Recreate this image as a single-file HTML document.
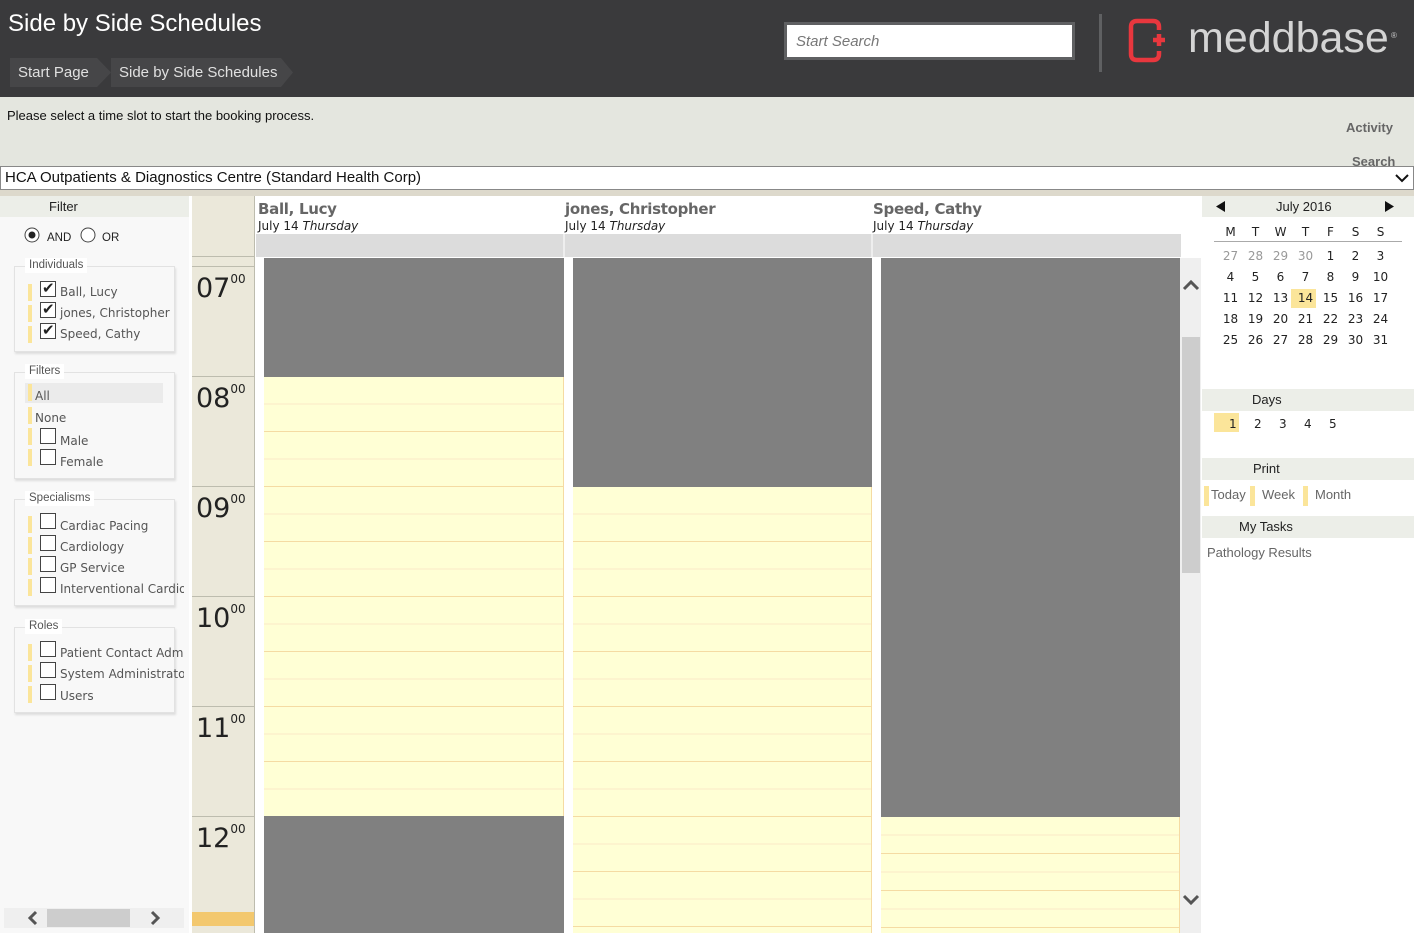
<!DOCTYPE html>
<html><head><meta charset="utf-8"><style>
*{margin:0;padding:0;box-sizing:border-box}
body{width:1414px;height:933px;overflow:hidden;position:relative;background:#fff;font-family:"Liberation Sans","DejaVu Sans",sans-serif;font-size:13px;color:#222}
.a{position:absolute}
.hdr{left:0;top:0;width:1414px;height:97px;background:#3a3a3c}
.bc{top:58px;height:29px;background:#464648;color:#e0e0e0;font-size:15px;line-height:29px}
.legend{background:#fff;color:#555;font-size:11.5px;padding:0 4px;height:15px;line-height:15px}
.fs{border:1px solid #e2e2e2;box-shadow:1px 2px 2px #ddd;background:#f8f8f8}
.bar{width:4px;height:17px;background:#fbe59a}
.cb{width:16px;height:16px;border:1.5px solid #444;background:#fff}
.lbl{color:#555;font-family:"DejaVu Sans",sans-serif;font-size:12px}
.hr{font-size:27px;color:#222;font-family:"DejaVu Sans",sans-serif}
.hr sup{font-size:12px;vertical-align:14px}
.gray{background:#808080}
.yel{background:#ffffd5 repeating-linear-gradient(to bottom,transparent 0 26.5px,#fbe9c6 26.5px 27.5px,transparent 27.5px 54px,#f5dba3 54px 55px)}
.yel2{background:#ffffd5 repeating-linear-gradient(to bottom,transparent 0 17.5px,#fbe9c6 17.5px 18.5px,transparent 18.5px 36px,#f5dba3 36px 37px)}
.nm{font-family:"DejaVu Sans",sans-serif;font-weight:bold;font-size:15px;color:#666;letter-spacing:-0.3px}
.dt{font-family:"DejaVu Sans",sans-serif;font-size:12px;color:#222}
.cal{font-family:"DejaVu Sans",sans-serif;font-size:12px;text-align:center;width:25px}
.sec{background:#eceee8;color:#222;font-size:13px;height:22px;line-height:22px}
</style></head><body>
<div class="a hdr"></div>
<div class="a" style="left:8px;top:10px;color:#fff;font-size:24px">Side by Side Schedules</div>
<div class="a bc" style="left:10px;width:87px;padding-left:8px">Start Page</div>
<svg class="a" style="left:97px;top:58px" width="14" height="29"><polygon points="0,0 14,14.5 0,29" fill="#464648"/></svg>
<div class="a bc" style="left:111px;width:170px;padding-left:8px">Side by Side Schedules</div>
<svg class="a" style="left:281px;top:58px" width="12" height="29"><polygon points="0,0 12,14.5 0,29" fill="#464648"/></svg>
<div class="a" style="left:784px;top:22px;width:291px;height:38px;border:3px solid #5f6062;background:#fff;color:#777;font-style:italic;font-size:15px;padding:8px 0 0 9px">Start Search</div>
<div class="a" style="left:1099px;top:14px;width:3px;height:58px;background:#5f6062"></div>
<svg class="a" style="left:1128px;top:18px" width="50" height="46"><path d="M25 3 H9 Q3 3 3 9 V36 Q3 42 9 42 H25 Q31 42 31 36 V33 M31 12 V9 Q31 3 25 3" fill="none" stroke="#e8373e" stroke-width="4.5"/><path d="M31 16 V28 M25 22 H37" stroke="#e8373e" stroke-width="4.5"/></svg>
<div class="a" style="left:1188px;top:14px;color:#d4d4d4;font-size:43px;font-family:'Liberation Sans',sans-serif">meddbase</div>
<div class="a" style="left:1391px;top:31px;color:#ccc;font-size:8px">®</div>
<div class="a" style="left:0;top:97px;width:1414px;height:69px;background:#e4e6df"></div>
<div class="a" style="left:7px;top:108px;font-size:13px;color:#111">Please select a time slot to start the booking process.</div>
<div class="a" style="left:1346px;top:120px;font-size:13px;font-weight:bold;color:#666">Activity</div>
<div class="a" style="left:1352px;top:154px;font-size:13px;font-weight:bold;color:#666">Search</div>
<div class="a" style="left:0;top:166px;width:1414px;height:24px;background:#fff;border:1px solid #888;font-size:15px;padding:2px 0 0 4px;color:#111">HCA Outpatients &amp; Diagnostics Centre (Standard Health Corp)</div>
<svg class="a" style="left:1394px;top:172px" width="16" height="12"><path d="M2 3 L8 9 L14 3" fill="none" stroke="#111" stroke-width="2"/></svg>
<div class="a" style="left:0;top:190px;width:1414px;height:6px;background:#ddd9cc"></div>
<!-- left panel -->
<div class="a" style="left:0;top:196px;width:189px;height:737px;background:#f8f8f8"></div>
<div class="a sec" style="left:0;top:196px;width:189px;height:21px;line-height:21px;text-align:left;padding-left:49px">Filter</div>
<svg class="a" style="left:24px;top:227px" width="100" height="18"><circle cx="8" cy="8" r="7" fill="#fff" stroke="#444"/><circle cx="8" cy="8" r="3.5" fill="#222"/><circle cx="64" cy="8" r="7" fill="#fff" stroke="#444"/></svg>
<div class="a" style="left:47px;top:232px;font-size:11.5px">AND</div>
<div class="a" style="left:102px;top:232px;font-size:11.5px">OR</div>

<div class="a fs" style="left:14px;top:266px;width:161px;height:86px"></div>
<div class="a legend" style="left:25px;top:258px">Individuals</div>
<div class="a fs" style="left:14px;top:372px;width:161px;height:107px"></div>
<div class="a legend" style="left:25px;top:364px">Filters</div>
<div class="a" style="left:25px;top:383px;width:138px;height:20px;background:#ebebeb"></div>
<div class="a fs" style="left:14px;top:499px;width:161px;height:107px"></div>
<div class="a legend" style="left:25px;top:491px">Specialisms</div>
<div class="a fs" style="left:14px;top:627px;width:161px;height:86px"></div>
<div class="a legend" style="left:25px;top:619px">Roles</div>

<div class="a bar" style="left:28px;top:284px"></div><div class="a cb" style="left:40px;top:281px"></div><div class="a" style="left:42px;top:279px;font-size:15px;font-weight:bold">✔</div><div class="a lbl" style="left:60px;top:285px">Ball, Lucy</div>
<div class="a bar" style="left:28px;top:305px"></div><div class="a cb" style="left:40px;top:302px"></div><div class="a" style="left:42px;top:300px;font-size:15px;font-weight:bold">✔</div><div class="a lbl" style="left:60px;top:306px">jones, Christopher</div>
<div class="a bar" style="left:28px;top:326px"></div><div class="a cb" style="left:40px;top:323px"></div><div class="a" style="left:42px;top:321px;font-size:15px;font-weight:bold">✔</div><div class="a lbl" style="left:60px;top:327px">Speed, Cathy</div>

<div class="a bar" style="left:28px;top:384px"></div><div class="a lbl" style="left:35px;top:389px">All</div>
<div class="a bar" style="left:28px;top:407px"></div><div class="a lbl" style="left:35px;top:411px">None</div>
<div class="a bar" style="left:28px;top:428px"></div><div class="a cb" style="left:40px;top:428px"></div><div class="a lbl" style="left:60px;top:434px">Male</div>
<div class="a bar" style="left:28px;top:449px"></div><div class="a cb" style="left:40px;top:449px"></div><div class="a lbl" style="left:60px;top:455px">Female</div>

<div class="a bar" style="left:28px;top:516px"></div><div class="a cb" style="left:40px;top:513px"></div><div class="a lbl" style="left:60px;top:519px">Cardiac Pacing</div>
<div class="a bar" style="left:28px;top:537px"></div><div class="a cb" style="left:40px;top:535px"></div><div class="a lbl" style="left:60px;top:540px">Cardiology</div>
<div class="a bar" style="left:28px;top:558px"></div><div class="a cb" style="left:40px;top:556px"></div><div class="a lbl" style="left:60px;top:561px">GP Service</div>
<div class="a bar" style="left:28px;top:579px"></div><div class="a cb" style="left:40px;top:577px"></div><div class="a lbl" style="left:60px;top:582px;white-space:nowrap;width:124px;overflow:hidden">Interventional Cardiology</div>

<div class="a bar" style="left:28px;top:644px"></div><div class="a cb" style="left:40px;top:641px"></div><div class="a lbl" style="left:60px;top:646px;white-space:nowrap;width:124px;overflow:hidden">Patient Contact Admin</div>
<div class="a bar" style="left:28px;top:665px"></div><div class="a cb" style="left:40px;top:662px"></div><div class="a lbl" style="left:60px;top:667px;white-space:nowrap;width:124px;overflow:hidden">System Administrator</div>
<div class="a bar" style="left:28px;top:686px"></div><div class="a cb" style="left:40px;top:684px"></div><div class="a lbl" style="left:60px;top:689px">Users</div>

<div class="a" style="left:4px;top:908px;width:180px;height:20px;background:#efefef"></div>
<div class="a" style="left:47px;top:909px;width:83px;height:18px;background:#cdcdcd"></div>
<svg class="a" style="left:24px;top:910px" width="150" height="16"><path d="M12 2 L6 8 L12 14" fill="none" stroke="#555" stroke-width="3"/><path d="M128 2 L134 8 L128 14" fill="none" stroke="#555" stroke-width="3"/></svg>
<!-- time column -->
<div class="a" style="left:192px;top:196px;width:63px;height:737px;background:#ebe8da;border-right:1px solid #bdbcae"></div>
<div class="a" style="left:192px;top:256px;width:62px;height:1px;background:#bdbcae"></div>
<div class="a" style="left:192px;top:266px;width:62px;height:1px;background:#bdbcae"></div>
<div class="a" style="left:192px;top:376px;width:62px;height:1px;background:#bdbcae"></div>
<div class="a" style="left:192px;top:486px;width:62px;height:1px;background:#bdbcae"></div>
<div class="a" style="left:192px;top:596px;width:62px;height:1px;background:#bdbcae"></div>
<div class="a" style="left:192px;top:706px;width:62px;height:1px;background:#bdbcae"></div>
<div class="a" style="left:192px;top:816px;width:62px;height:1px;background:#bdbcae"></div>
<div class="a" style="left:192px;top:912px;width:62px;height:14px;background:#f3c86e"></div>
<div class="a hr" style="left:196px;top:272px">07<sup>00</sup></div>
<div class="a hr" style="left:196px;top:382px">08<sup>00</sup></div>
<div class="a hr" style="left:196px;top:492px">09<sup>00</sup></div>
<div class="a hr" style="left:196px;top:602px">10<sup>00</sup></div>
<div class="a hr" style="left:196px;top:712px">11<sup>00</sup></div>
<div class="a hr" style="left:196px;top:822px">12<sup>00</sup></div>
<!-- columns -->
<div class="a" style="left:256px;top:234px;width:925px;height:23px;background:#dcdcdc"></div>
<div class="a" style="left:563px;top:234px;width:2px;height:23px;background:#eee"></div>
<div class="a" style="left:871px;top:234px;width:2px;height:23px;background:#eee"></div>
<div class="a nm" style="left:258px;top:200px">Ball, Lucy</div><div class="a dt" style="left:258px;top:219px">July 14 <i>Thursday</i></div>
<div class="a nm" style="left:565px;top:200px">jones, Christopher</div><div class="a dt" style="left:565px;top:219px">July 14 <i>Thursday</i></div>
<div class="a nm" style="left:873px;top:200px">Speed, Cathy</div><div class="a dt" style="left:873px;top:219px">July 14 <i>Thursday</i></div>

<div class="a gray" style="left:264px;top:258px;width:300px;height:119px"></div>
<div class="a yel" style="left:264px;top:377px;width:300px;height:439px;border-right:1px solid #f5dba3"></div>
<div class="a gray" style="left:264px;top:816px;width:300px;height:117px"></div>

<div class="a gray" style="left:573px;top:258px;width:299px;height:229px"></div>
<div class="a yel" style="left:573px;top:487px;width:299px;height:446px;border-right:1px solid #f5dba3"></div>

<div class="a gray" style="left:881px;top:258px;width:299px;height:559px"></div>
<div class="a yel2" style="left:881px;top:817px;width:299px;height:116px;border-right:1px solid #f5dba3"></div>
<!-- scrollbar -->
<div class="a" style="left:1180px;top:258px;width:21px;height:675px;background:#efefef"></div>
<div class="a" style="left:1182px;top:337px;width:18px;height:236px;background:#cdcdcd"></div>
<svg class="a" style="left:1182px;top:278px" width="18" height="630"><path d="M2 11 L9 4 L16 11" fill="none" stroke="#555" stroke-width="3"/><path d="M2 618 L9 625 L16 618" fill="none" stroke="#555" stroke-width="3"/></svg>
<!-- right panel -->
<div class="a sec" style="left:1202px;top:196px;width:212px;height:21px;line-height:21px;padding-left:74px">July 2016</div>
<svg class="a" style="left:1216px;top:201px" width="180" height="11"><polygon points="0,5.5 9,0 9,11" fill="#111"/><polygon points="178,5.5 169,0 169,11" fill="#111"/></svg>
<div class="a" style="left:1214px;top:241px;width:188px;height:1px;background:#aaa"></div>
<div class="a" style="left:1291px;top:289px;width:25px;height:19px;background:#fbe59a"></div>
<div class="a sec" style="left:1202px;top:389px;width:212px;padding-left:50px">Days</div>
<div class="a" style="left:1214px;top:413px;width:25px;height:19px;background:#fbe59a"></div>
<div class="a dt" style="left:1229px;top:417px">1</div><div class="a dt" style="left:1254px;top:417px">2</div><div class="a dt" style="left:1279px;top:417px">3</div><div class="a dt" style="left:1304px;top:417px">4</div><div class="a dt" style="left:1329px;top:417px">5</div>
<div class="a sec" style="left:1202px;top:458px;width:212px;padding-left:51px">Print</div>
<div class="a bar" style="left:1204px;top:486px;width:5px;height:20px"></div><div class="a" style="left:1211px;top:487px;color:#666;font-size:13px">Today</div>
<div class="a bar" style="left:1250px;top:486px;width:5px;height:20px"></div><div class="a" style="left:1262px;top:487px;color:#666;font-size:13px">Week</div>
<div class="a bar" style="left:1303px;top:486px;width:5px;height:20px"></div><div class="a" style="left:1315px;top:487px;color:#666;font-size:13px">Month</div>
<div class="a sec" style="left:1202px;top:516px;width:212px;padding-left:37px">My Tasks</div>
<div class="a" style="left:1207px;top:545px;color:#666;font-size:13px">Pathology Results</div>
<div class="a dt" style="left:1218px;top:222px;width:190px;line-height:21px">
<div style="display:flex"><span class="cal">M</span><span class="cal">T</span><span class="cal">W</span><span class="cal">T</span><span class="cal">F</span><span class="cal">S</span><span class="cal">S</span></div>
<div style="display:flex;margin-top:3px"><span class="cal" style="color:#999">27</span><span class="cal" style="color:#999">28</span><span class="cal" style="color:#999">29</span><span class="cal" style="color:#999">30</span><span class="cal">1</span><span class="cal">2</span><span class="cal">3</span></div>
<div style="display:flex"><span class="cal">4</span><span class="cal">5</span><span class="cal">6</span><span class="cal">7</span><span class="cal">8</span><span class="cal">9</span><span class="cal">10</span></div>
<div style="display:flex"><span class="cal">11</span><span class="cal">12</span><span class="cal">13</span><span class="cal">14</span><span class="cal">15</span><span class="cal">16</span><span class="cal">17</span></div>
<div style="display:flex"><span class="cal">18</span><span class="cal">19</span><span class="cal">20</span><span class="cal">21</span><span class="cal">22</span><span class="cal">23</span><span class="cal">24</span></div>
<div style="display:flex"><span class="cal">25</span><span class="cal">26</span><span class="cal">27</span><span class="cal">28</span><span class="cal">29</span><span class="cal">30</span><span class="cal">31</span></div>
</div>
</body></html>
